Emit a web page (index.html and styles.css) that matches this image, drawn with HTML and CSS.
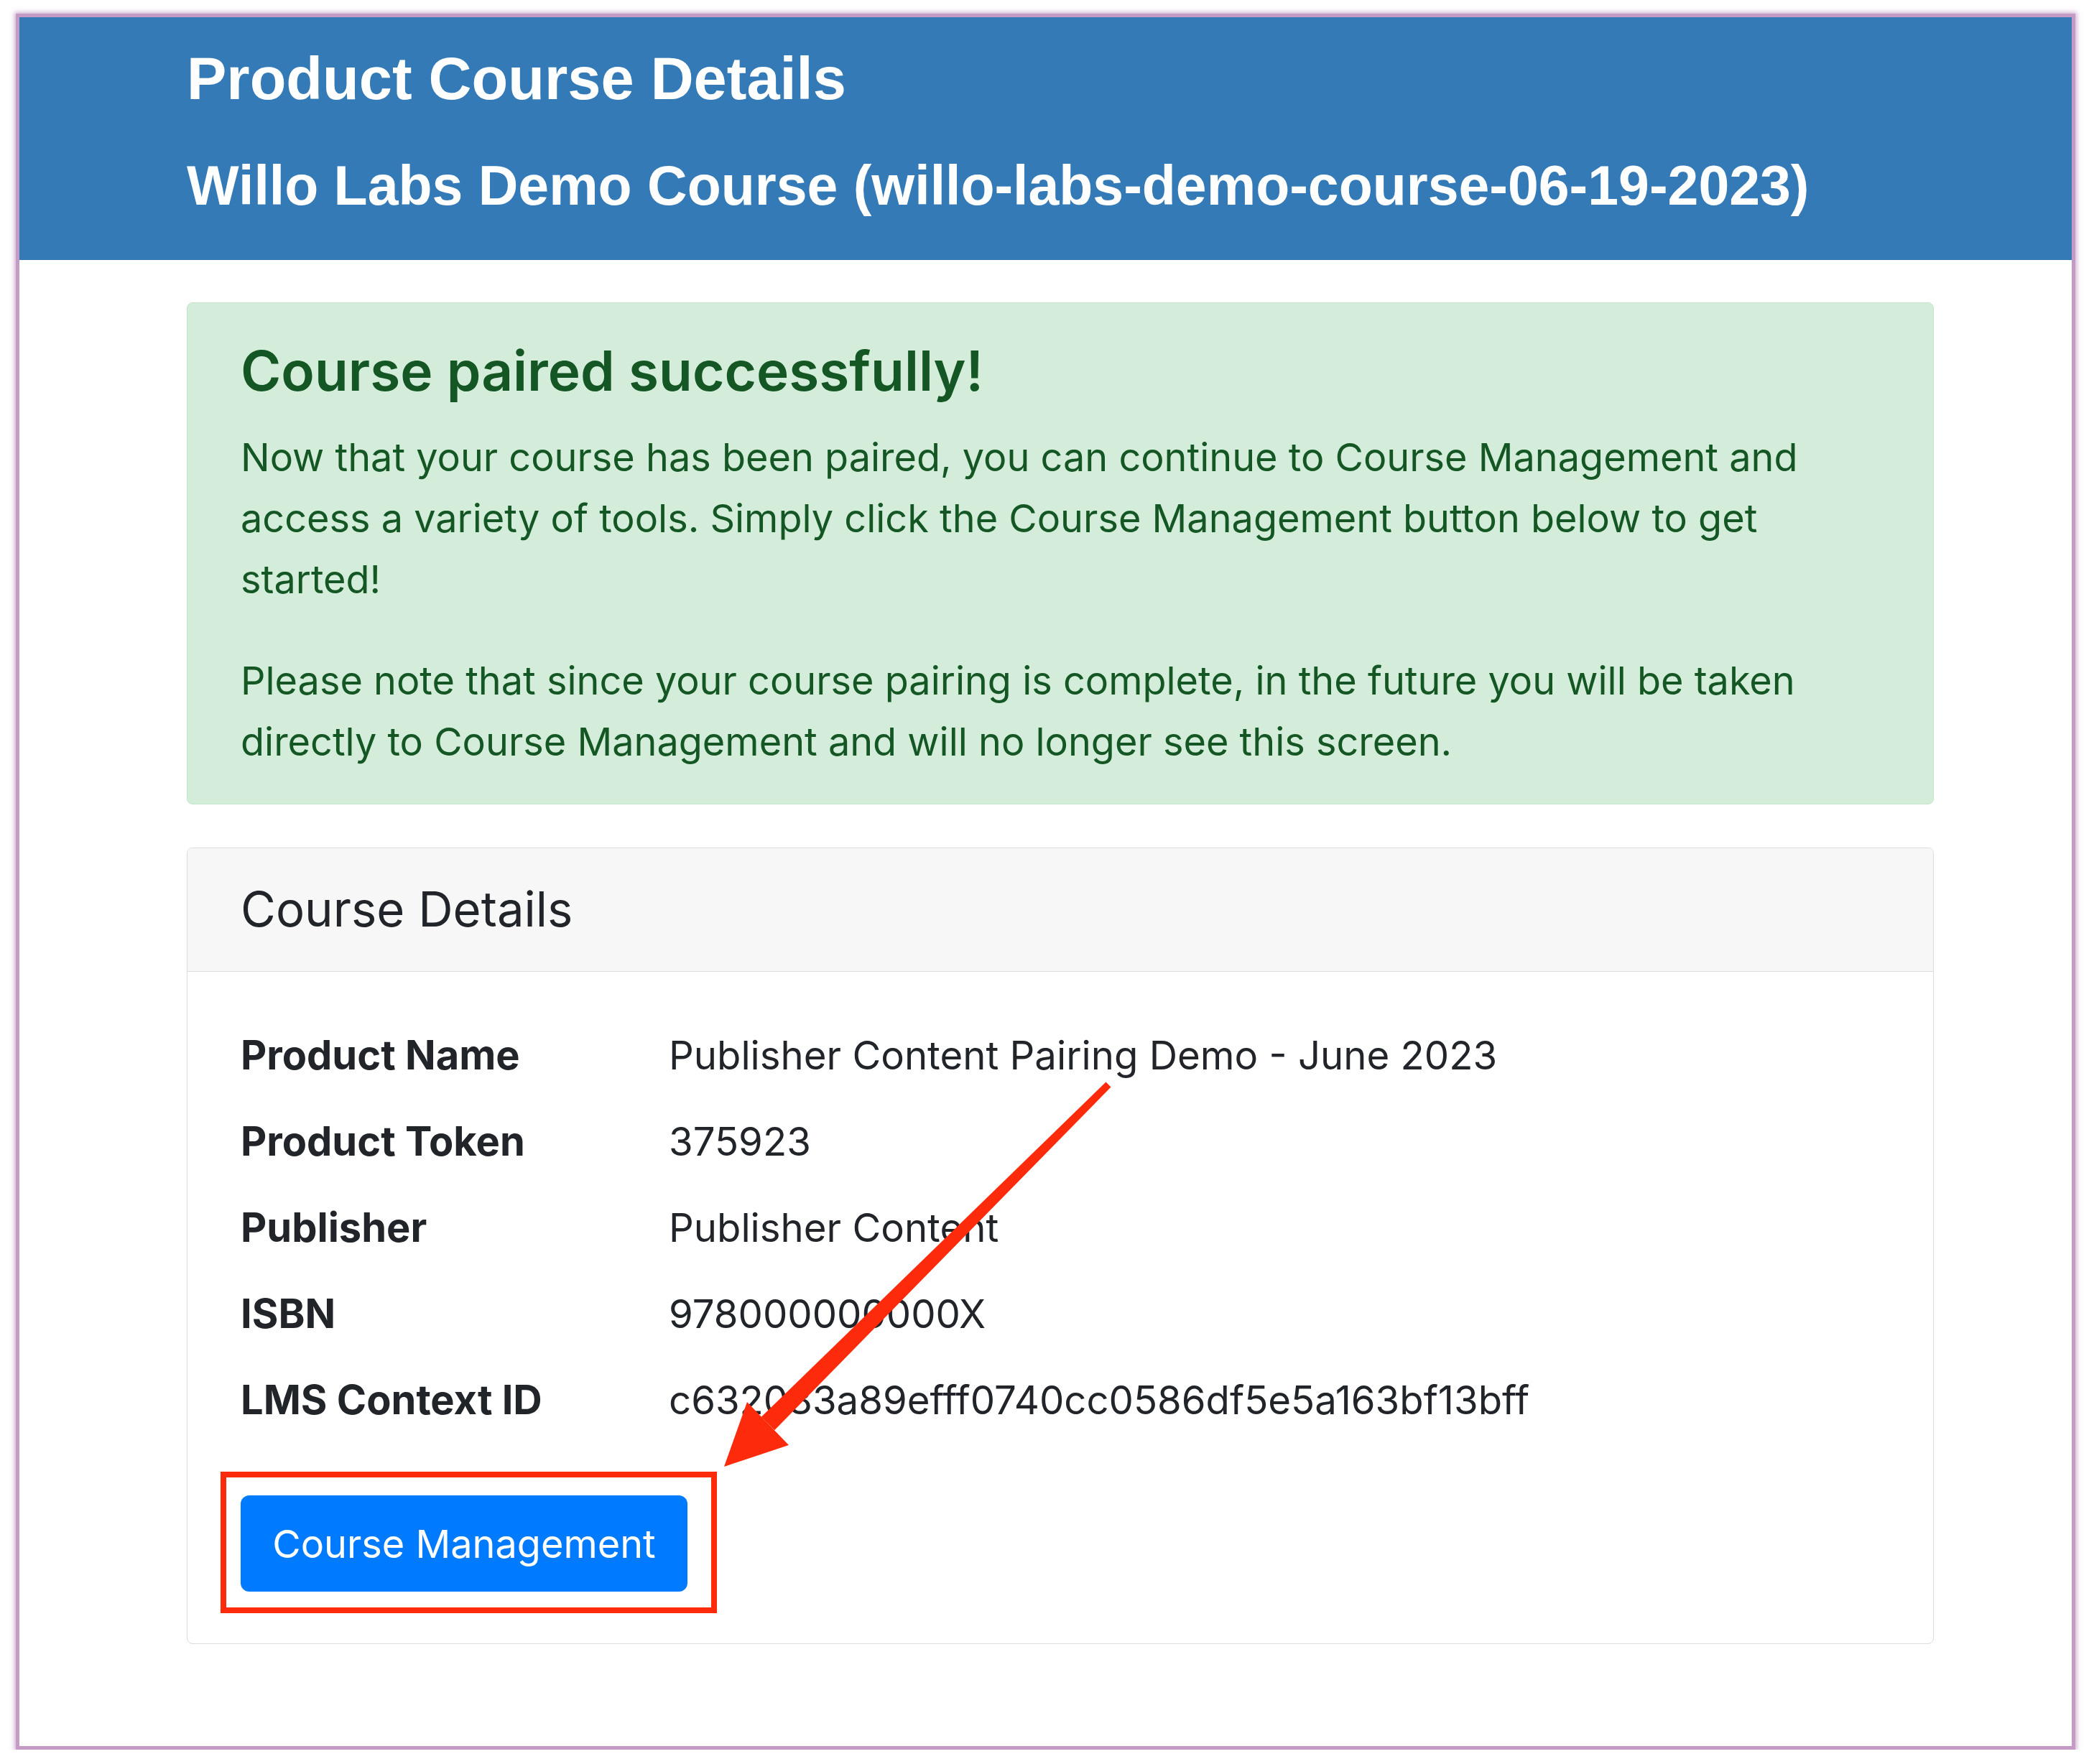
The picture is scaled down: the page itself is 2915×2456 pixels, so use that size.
FILE: index.html
```html
<!DOCTYPE html>
<html>
<head>
<meta charset="utf-8">
<title>Product Course Details</title>
<link rel="stylesheet" href="styles.css">
</head>
<body>
<div class="frame">
	<div class="page-header">
		<h1>Product Course Details</h1>
		<h2>Willo Labs Demo Course (willo-labs-demo-course-06-19-2023)</h2>
	</div>
	<div class="container">
		<div class="alert alert-success">
			<h4 class="alert-heading">Course paired successfully!</h4>
			<p>Now that your course has been paired, you can continue to Course Management and access a variety of tools. Simply click the Course Management button below to get started!</p>
			<p>Please note that since your course pairing is complete, in the future you will be taken directly to Course Management and will no longer see this screen.</p>
		</div>
		<div class="card">
			<div class="card-header">Course Details</div>
			<div class="card-body">
				<table class="details">
					<tr><th>Product Name</th><td>Publisher Content Pairing Demo - June 2023</td></tr>
					<tr><th>Product Token</th><td>375923</td></tr>
					<tr><th>Publisher</th><td>Publisher Content</td></tr>
					<tr><th>ISBN</th><td>978000000000X</td></tr>
					<tr><th>LMS Context ID</th><td>c632083a89efff0740cc0586df5e5a163bf13bff</td></tr>
				</table>
				<button class="btn btn-primary" type="button">Course Management</button>
			</div>
		</div>
	</div>
	<!-- annotation drawn over the screenshot -->
	<div class="callout-box"></div>
	<svg class="callout-arrow" width="2857" height="2407" viewBox="0 0 2857 2407">
		<polygon points="1519.5,1489.5 1051.2,1967.2 1032.8,1948.8 1512.5,1482.5" fill="#fd2b0c" />
		<polygon points="981,2018 1071,1988 1013,1928" fill="#fd2b0c" />
	</svg>
</div>
</body>
</html>
```

FILE: styles.css
```css
body {
	margin: 0;
	background: #fff;
	font-family: "Inter", "Noto Sans", sans-serif;
	color: #212529;
}

.frame {
	position: relative;
	width: 2857px;
	height: 2407px;
	margin: 19px 0 0 22px;
	border: 5px solid #c49bc4;
	box-shadow: 0 0 6px 2px rgba(170, 110, 170, .55);
	overflow: hidden;
	background: #fff;
}

.page-header {
	height: 338px;
	box-sizing: border-box;
	padding: 36px 0 0 233px;
	background: #337ab7;
	color: #fff;
	font-family: "Liberation Sans", Arial, sans-serif;
}

.page-header h1 {
	margin: 0;
	font-size: 83px;
	line-height: 100px;
	font-weight: bold;
}

.page-header h2 {
	margin: 52px 0 0;
	font-size: 77px;
	line-height: 92px;
	font-weight: bold;
}

.container {
	width: 2432px;
	margin: 59px 0 0 233px;
}

.alert {
	padding: 49px 74px 44px;
	border: 1px solid #c3e6cb;
	border-radius: 8px;
	background: #d4edda;
	color: #155724;
}

.alert-heading {
	margin: 0 0 32px;
	font-size: 76.5px;
	line-height: 91px;
	font-weight: 600;
}

.alert p {
	max-width: 2210px;
	margin: 0 0 56px;
	font-size: 54px;
	line-height: 85px;
}

.alert p:last-child {
	margin-bottom: 0;
}

.card {
	margin-top: 60px;
	border: 1px solid #dcdcdc;
	border-radius: 8px;
}

.card-header {
	padding: 45px 74px 46px;
	border-bottom: 1px solid #dcdcdc;
	background: #f7f7f7;
	border-radius: 8px 8px 0 0;
	font-size: 67px;
	line-height: 80px;
}

.card-body {
	padding: 56px 74px 72px;
}

.details {
	border-collapse: collapse;
	font-size: 54.5px;
	line-height: 85px;
}

.details th,
.details td {
	height: 85px;
	padding: 17.5px 0;
	text-align: left;
	vertical-align: top;
}

.details th {
	width: 596px;
	font-size: 56px;
	font-weight: bold;
}

.btn {
	display: block;
	margin-top: 73px;
	width: 622px;
	height: 134px;
	padding: 0;
	border: 0;
	border-radius: 12px;
	font-family: inherit;
	font-size: 54px;
}

.btn-primary {
	background: #007bff;
	color: #fff;
}

.callout-box {
	position: absolute;
	left: 280px;
	top: 2025px;
	width: 691px;
	height: 197px;
	box-sizing: border-box;
	border: 8px solid #fd2b0c;
}

.callout-arrow {
	position: absolute;
	left: 0;
	top: 0;
	pointer-events: none;
}
```
